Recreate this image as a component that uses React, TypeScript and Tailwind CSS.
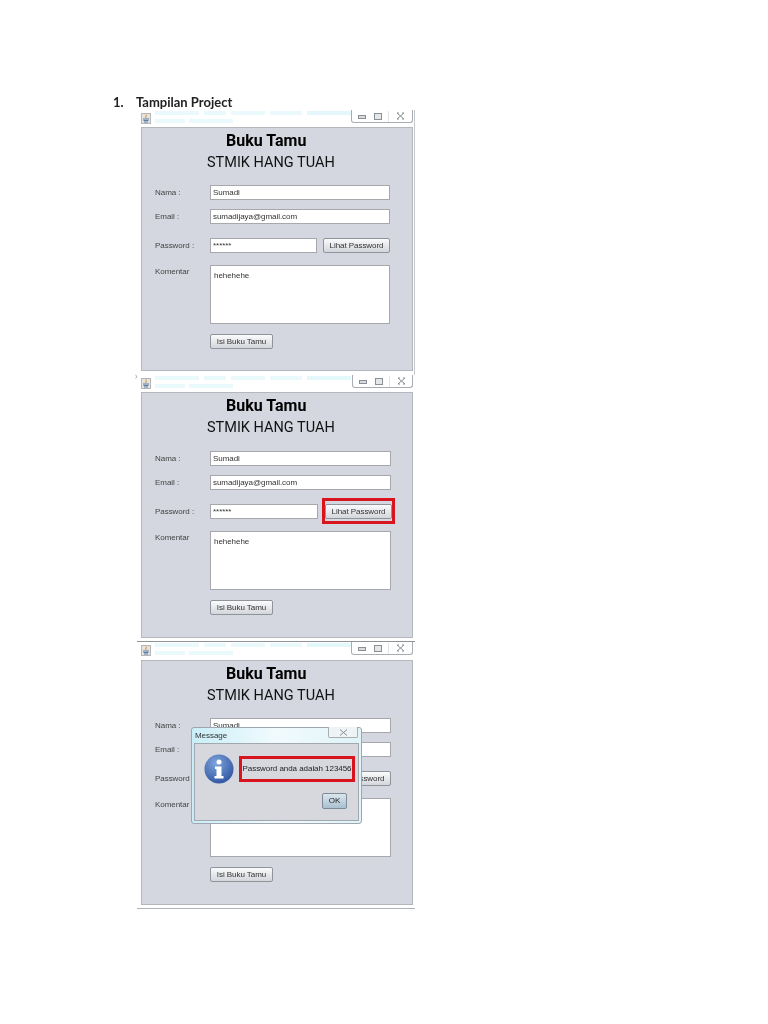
import React from 'react'

const sans = 'font-["Liberation_Sans",sans-serif]'
const title = 'font-["Roboto",sans-serif]'
const heading = 'font-["Lato",sans-serif]'

function Controls({ className }: { className: string }) {
  return (
    <div className={`flex items-center pl-[6px] h-[13px] border border-t-0 border-[#a9adb3] rounded-b-[3px] bg-white ${className}`}>
      <div className="w-[8px] h-[4px] mt-[2px] border border-[#8a8f96] bg-[#d8dadd]" />
      <div className="w-[8px] h-[7px] ml-[8px] border border-[#8a8f96] bg-[#e4e6e8]" />
      <div className="w-px h-[11px] ml-[6px] bg-[#e2e4e6]" />
      <svg width="9" height="8" viewBox="0 0 9 8" className="ml-[7px] text-[#8a8f96]">
        <path d="M1 1l7 6M8 1L1 7M1 1h2M6 1h2M1 7h2M6 7h2" stroke="currentColor" strokeWidth="1" fill="none" />
      </svg>
    </div>
  )
}

function JavaIcon() {
  return (
    <div className="w-[10px] h-[11px] border border-[#b3b6ba] bg-[#e6e3dc] flex items-center justify-center shrink-0">
      <svg width="8" height="9" viewBox="0 0 8 9">
        <path d="M4 0.5c1 1.5-1 2 0 3.5" stroke="#d9822b" strokeWidth="1" fill="none" />
        <path d="M1 5h6M1.500 6.500h5M2 8h4" stroke="#5a7fa8" strokeWidth="1" />
      </svg>
    </div>
  )
}

function Smudges() {
  return (
    <div className="flex-1 flex flex-col gap-[4px] ml-[4px] mt-[1px]">
      <div className="flex gap-[5px]">
        <div className="w-[44px] h-[4px] bg-[#eaf9fc]" />
        <div className="w-[22px] h-[4px] bg-[#eaf9fc]" />
        <div className="w-[34px] h-[4px] bg-[#eaf9fc]" />
        <div className="w-[32px] h-[4px] bg-[#eaf9fc]" />
        <div className="w-[44px] h-[4px] bg-[#e4f7fb]" />
      </div>
      <div className="flex gap-[4px]">
        <div className="w-[30px] h-[4px] bg-[#eaf9fc]" />
        <div className="w-[44px] h-[4px] bg-[#eaf9fc]" />
      </div>
    </div>
  )
}

function Field({ label, value, wide }: { label: string; value: string; wide: string }) {
  return (
    <div className="flex items-center h-[15px]">
      <span className="w-[55px] text-[8px] tracking-[-0.05px] text-[#444]">{label}</span>
      <div className={`h-[15px] bg-white border border-[#a6a8ad] pl-[2px] flex items-center text-[8px] tracking-[-0.05px] text-[#333] ${wide}`}>
        {value}
      </div>
    </div>
  )
}

function Btn({ label, className }: { label: string; className: string }) {
  return (
    <div className={`h-[15px] flex items-center justify-center rounded-[2px] border border-[#8f949b] bg-gradient-to-b from-[#fbfbfc] to-[#d3d6db] text-[8px] tracking-[-0.05px] text-[#333] ${className}`}>
      {label}
    </div>
  )
}

function FormWindow({ inputW, passW, panelH, firstGap, btnGap, children }: {
  inputW: string
  passW: string
  panelH: string
  firstGap: string
  btnGap: string
  children?: React.ReactNode
}) {
  return (
    <div className={`relative ml-[28px] w-[272px] border border-[#b4b7bc] bg-[#d4d7e0] pl-[13px] ${panelH}`}>
      <div className={`${title} text-[16px] font-bold text-black leading-[22px] pl-[71px] mt-[2px]`}>Buku Tamu</div>
      <div className={`${title} text-[14.500px] text-[#111] leading-[22px] pl-[52px]`}>STMIK HANG TUAH</div>
      <div className={`flex flex-col ${sans}`}>
        <div className={firstGap}>
          <Field label="Nama :" value="Sumadi" wide={inputW} />
        </div>
        <div className="mt-[9px]">
          <Field label="Email :" value="sumadijaya@gmail.com" wide={inputW} />
        </div>
        <div className="mt-[14px] flex">
          <Field label="Password :" value="******" wide={passW} />
          <div className={`relative ${btnGap}`}>
            <Btn label="Lihat Password" className="w-[67px]" />
            {children}
          </div>
        </div>
        <div className="mt-[12px] flex">
          <span className="w-[55px] pt-[1px] text-[8px] tracking-[-0.05px] text-[#444]">Komentar</span>
          <div className={`h-[59px] bg-white border border-[#a6a8ad] pl-[3px] pt-[4px] text-[8px] tracking-[-0.05px] text-[#333] ${inputW}`}>
            hehehehe
          </div>
        </div>
        <div className="mt-[10px] ml-[55px]">
          <Btn label="Isi Buku Tamu" className="w-[63px]" />
        </div>
      </div>
    </div>
  )
}

function InfoIcon() {
  return (
    <svg width="30" height="30" viewBox="0 0 30 30" className="shrink-0">
      <defs>
        <radialGradient id="info" cx="0.4" cy="0.3" r="0.8">
          <stop offset="0" stopColor="#7fa4dc" />
          <stop offset="1" stopColor="#2a4f9c" />
        </radialGradient>
      </defs>
      <circle cx="15" cy="15" r="14.500" fill="url(#info)" />
      <circle cx="15" cy="8" r="2.500" fill="#fff" />
      <path d="M11 12.500h6.500v9.500h2v2.500h-9V22h2v-7h-1.500z" fill="#fff" />
    </svg>
  )
}

function MessageDialog() {
  return (
    <div className="absolute left-[191px] top-[727px] w-[171px] h-[97px] rounded-[3px] border border-[#9fa6ad] bg-gradient-to-r from-[#c9eef8] via-[#f1fbfd] to-[#dff3f8] px-[2px]">
      <div className={`${sans} relative h-[15px] flex items-center pl-[1px] text-[8px] tracking-[-0.05px] text-[#333]`}>
        Message
        <div className="absolute right-[1px] top-[-1px] w-[30px] h-[11px] flex items-center justify-center border border-t-0 border-[#a9adb3] rounded-b-[2px] bg-[#eef3f5]">
          <svg width="9" height="7" viewBox="0 0 9 7">
            <path d="M1 0.500l7 6M8 0.500l-7 6" stroke="#8a8f96" strokeWidth="1" fill="none" />
          </svg>
        </div>
      </div>
      <div className="h-[78px] border border-[#a3a8ae] bg-[#d6d8dd] pl-[9px] pt-[10px] flex">
        <InfoIcon />
        <div className="ml-[5px] flex flex-col">
          <div className={`${sans} mt-[2px] w-[116px] h-[26px] border-[3px] border-[#d8141e] flex items-center justify-center text-[8px] tracking-[-0.05px] text-[#222] whitespace-nowrap`}>
            Password anda adalah 123456
          </div>
          <div className={`${sans} mt-[11px] ml-[83px] w-[25px] h-[16px] rounded-[2px] border border-[#7e8a96] bg-gradient-to-b from-[#dbe6ee] to-[#a9c0d2] flex items-center justify-center text-[8px] text-[#222]`}>
            OK
          </div>
        </div>
      </div>
    </div>
  )
}

export default function App() {
  return (
    <div className="relative w-[768px] h-[1024px] bg-white overflow-hidden blur-[0.35px]">
      <div className={`${heading} pt-[94px] pl-[113px] h-[16px] box-content flex text-[13px] font-bold text-[#222] leading-[16px]`}>
        <span className="w-[23px]">1.</span>
        <span>Tampilan Project</span>
      </div>

      <div className="ml-[113px] w-[302px]">
        {/* window 1 */}
        <div className="h-[17px] flex ml-[28px] w-[274px] relative">
          <div className="mt-[3px]"><JavaIcon /></div>
          <Smudges />
          <Controls className="w-[63px] mr-[2px]" />
          <div className="absolute right-0 top-0 h-[265px] w-px bg-[#c4c7cb]" />
        </div>
        <FormWindow inputW="w-[180px]" passW="w-[107px]" panelH="h-[244px]" firstGap="mt-[11px]" btnGap="ml-[6px]" />

        {/* window 2 */}
        <div className="h-[4px]" />
        <div className="h-[17px] flex ml-[28px] w-[274px] relative">
          <span className="absolute left-[-6px] top-[-5px] text-[8px] text-[#999]">›</span>
          <div className="mt-[3px]"><JavaIcon /></div>
          <Smudges />
          <Controls className="w-[61px] mr-[2px]" />
        </div>
        <FormWindow inputW="w-[181px]" passW="w-[108px]" panelH="h-[246px]" firstGap="mt-[12px]" btnGap="ml-[7px]">
          <div className="absolute left-[-3px] top-[-6px] w-[73px] h-[26px] border-[3px] border-[#d8141e]" />
        </FormWindow>

        {/* window 3 */}
        <div className="h-[3px]" />
        <div className="h-px ml-[24px] w-[278px] bg-[#8f9296]" />
        <div className="h-[18px] flex ml-[28px] w-[274px]">
          <div className="mt-[3px]"><JavaIcon /></div>
          <Smudges />
          <Controls className="w-[62px] mr-[2px]" />
        </div>
        <FormWindow inputW="w-[181px]" passW="w-[108px]" panelH="h-[245px]" firstGap="mt-[11px]" btnGap="ml-[6px]" />
        <div className="h-px mt-[3px] ml-[24px] w-[278px] bg-[#b0b3b7]" />
      </div>

      <MessageDialog />
    </div>
  )
}
